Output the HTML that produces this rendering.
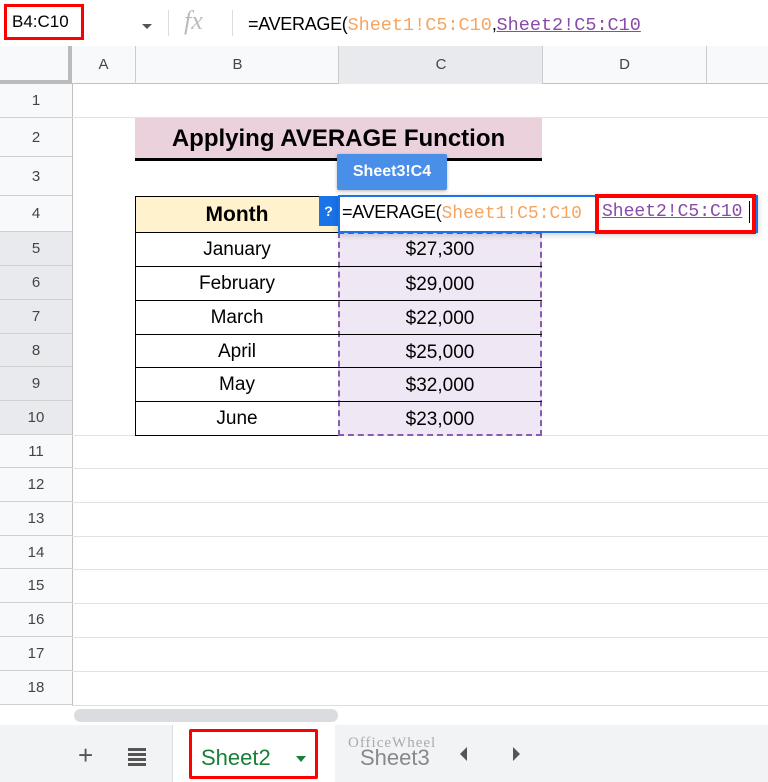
<!DOCTYPE html><html><head><style>
body{margin:0;width:768px;height:782px;position:relative;overflow:hidden;background:#fff;font-family:"Liberation Sans",Arial,sans-serif}
.a{position:absolute}
.mono{font-family:"Liberation Mono",monospace}
.rn{position:absolute;left:0;width:72px;text-align:center;font-size:15px;color:#444;background:#f8f9fa;border-bottom:1px solid #d0d0d0;box-sizing:border-box}
.hl{position:absolute;left:72px;width:696px;border-top:1px solid #e2e2e2}
.cell{position:absolute;text-align:center;font-size:19px;color:#000;box-sizing:border-box}
</style></head><body>
<div class="a" style="left:0;top:0;width:768px;height:46px;border-bottom:1px solid #d0d0d0;background:#fff"></div>
<div class="a" style="left:4px;top:4px;width:80px;height:36px;border:3px solid #f00;box-sizing:border-box;font-size:17px;line-height:30px;padding-left:5px">B4:C10</div>
<div class="a" style="left:142px;top:24px;width:0;height:0;border-left:5px solid transparent;border-right:5px solid transparent;border-top:5px solid #555"></div>
<div class="a" style="left:168px;top:10px;height:26px;border-left:1px solid #ddd"></div>
<div class="a" style="left:184px;top:6px;font-family:'Liberation Serif',serif;font-style:italic;font-size:26px;color:#bbb">fx</div>
<div class="a" style="left:232px;top:10px;height:26px;border-left:1px solid #ddd"></div>
<div class="a" style="left:248px;top:14px;font-size:18px;white-space:nowrap;letter-spacing:-0.3px">=AVERAGE(<span class="mono" style="color:#f6a460;font-size:18.5px;letter-spacing:0">Sheet1!C5:C10</span>,<span class="mono" style="color:#8a4ba8;text-decoration:underline;font-size:18.5px;letter-spacing:0">Sheet2!C5:C10</span></div>
<div class="a" style="left:0;top:46px;width:768px;height:38px;background:#f8f9fa;border-bottom:1px solid #c0c0c0;box-sizing:border-box"></div>
<div class="a" style="left:0;top:46px;width:72px;height:38px;border-right:4px solid #bbb;border-bottom:4px solid #bbb;box-sizing:border-box"></div>
<div class="a" style="left:338px;top:46px;width:204px;height:38px;background:#e8eaed"></div>
<div class="a" style="left:72px;top:56px;width:63px;text-align:center;font-size:15px;color:#444">A</div>
<div class="a" style="left:135px;top:46px;width:203px;height:38px;border-left:1px solid #ccc;text-align:center;line-height:38px;font-size:15px;color:#444">B</div>
<div class="a" style="left:338px;top:46px;width:204px;height:38px;border-left:1px solid #ccc;text-align:center;line-height:38px;font-size:15px;color:#444">C</div>
<div class="a" style="left:542px;top:46px;width:163px;height:38px;border-left:1px solid #ccc;border-right:1px solid #ccc;text-align:center;line-height:38px;font-size:15px;color:#444">D</div>
<div class="a" style="left:0;top:84px;width:72px;height:621px;background:#f8f9fa;border-right:1px solid #c0c0c0"></div>
<div class="rn" style="top:84px;height:34px;line-height:34px">1</div>
<div class="rn" style="top:118px;height:39px;line-height:39px">2</div>
<div class="rn" style="top:157px;height:39px;line-height:39px">3</div>
<div class="rn" style="top:196px;height:36px;line-height:36px">4</div>
<div class="rn" style="top:232px;height:34px;line-height:34px;background:#e8eaed">5</div>
<div class="rn" style="top:266px;height:34px;line-height:34px;background:#e8eaed">6</div>
<div class="rn" style="top:300px;height:34px;line-height:34px;background:#e8eaed">7</div>
<div class="rn" style="top:334px;height:33px;line-height:33px;background:#e8eaed">8</div>
<div class="rn" style="top:367px;height:34px;line-height:34px;background:#e8eaed">9</div>
<div class="rn" style="top:401px;height:34px;line-height:34px;background:#e8eaed">10</div>
<div class="rn" style="top:435px;height:33px;line-height:33px">11</div>
<div class="rn" style="top:468px;height:34px;line-height:34px">12</div>
<div class="rn" style="top:502px;height:34px;line-height:34px">13</div>
<div class="rn" style="top:536px;height:33px;line-height:33px">14</div>
<div class="rn" style="top:569px;height:34px;line-height:34px">15</div>
<div class="rn" style="top:603px;height:34px;line-height:34px">16</div>
<div class="rn" style="top:637px;height:34px;line-height:34px">17</div>
<div class="rn" style="top:671px;height:34px;line-height:34px">18</div>
<div class="hl" style="top:117px"></div><div class="hl" style="top:435px"></div><div class="hl" style="top:468px"></div><div class="hl" style="top:502px"></div><div class="hl" style="top:536px"></div><div class="hl" style="top:569px"></div><div class="hl" style="top:603px"></div><div class="hl" style="top:637px"></div><div class="hl" style="top:671px"></div>
<div class="a" style="left:135px;top:118px;width:407px;height:40px;background:#ead1dc;border-bottom:3px solid #000;font-weight:bold;font-size:24px;line-height:42px;text-align:center">Applying AVERAGE Function</div>
<div class="cell" style="left:135px;top:196px;width:204px;height:37px;background:#fff2cc;border:1px solid #000;font-weight:bold;font-size:21px;line-height:35px">Month</div>
<div class="cell" style="left:135px;top:232px;width:204px;height:35px;border:1px solid #000;border-top:none;line-height:36px">January</div>
<div class="cell" style="left:135px;top:266px;width:204px;height:35px;border:1px solid #000;border-top:none;line-height:36px">February</div>
<div class="cell" style="left:135px;top:300px;width:204px;height:35px;border:1px solid #000;border-top:none;line-height:36px">March</div>
<div class="cell" style="left:135px;top:334px;width:204px;height:34px;border:1px solid #000;border-top:none;line-height:35px">April</div>
<div class="cell" style="left:135px;top:367px;width:204px;height:35px;border:1px solid #000;border-top:none;line-height:36px">May</div>
<div class="cell" style="left:135px;top:401px;width:204px;height:35px;border:1px solid #000;border-top:none;line-height:36px">June</div>
<div class="a" style="left:338px;top:232px;width:204px;height:204px;background:#efe7f4;border:2px dashed #8a5bb0;box-sizing:border-box"></div>
<div class="cell" style="left:338px;top:232px;width:204px;height:34px;line-height:36px">$27,300</div>
<div class="cell" style="left:338px;top:266px;width:204px;height:34px;line-height:36px;border-top:1px solid #000">$29,000</div>
<div class="cell" style="left:338px;top:300px;width:204px;height:34px;line-height:36px;border-top:1px solid #000">$22,000</div>
<div class="cell" style="left:338px;top:334px;width:204px;height:33px;line-height:35px;border-top:1px solid #000">$25,000</div>
<div class="cell" style="left:338px;top:367px;width:204px;height:34px;line-height:36px;border-top:1px solid #000">$32,000</div>
<div class="cell" style="left:338px;top:401px;width:204px;height:34px;line-height:36px;border-top:1px solid #000">$23,000</div>
<div class="a" style="left:337px;top:154px;width:110px;height:36px;background:#4a8fe7;color:#fff;font-weight:bold;font-size:16px;line-height:36px;text-align:center;border-radius:2px;box-shadow:0 1px 3px rgba(0,0,0,.3)">Sheet3!C4</div>
<div class="a" style="left:319px;top:196px;width:19px;height:30px;background:#1a73e8;color:#fff;font-weight:bold;font-size:14px;text-align:center;line-height:30px">?</div>
<div class="a" style="left:338px;top:195px;width:420px;height:38px;border:2px solid #1a73e8;background:#fff;box-sizing:border-box;box-shadow:0 2px 6px rgba(0,0,0,.2)"></div>
<div class="a" style="left:342px;top:202px;font-size:18px;white-space:nowrap;letter-spacing:-0.3px">=AVERAGE(<span class="mono" style="color:#f6a460;font-size:18px;letter-spacing:0">Sheet1!C5:C10</span></div>
<div class="a" style="left:595px;top:194px;width:161px;height:40px;border:4px solid #f00;box-sizing:border-box"></div>
<div class="a mono" style="left:602px;top:202px;font-size:18px;color:#8a4ba8;text-decoration:underline">Sheet2!C5:C10</div>
<div class="a" style="left:749px;top:201px;height:22px;border-left:1px solid #000"></div>
<div class="a" style="left:72px;top:705px;width:696px;height:20px;background:#fff;border-top:1px solid #ddd"></div>
<div class="a" style="left:74px;top:709px;width:264px;height:13px;background:#dadce0;border-radius:7px"></div>
<div class="a" style="left:0;top:725px;width:768px;height:57px;background:#f1f3f4"></div>
<div class="a" style="left:78px;top:740px;font-size:26px;color:#555">+</div>
<div class="a" style="left:128px;top:748px;width:18px;height:3px;background:#555;box-shadow:0 5px 0 #555,0 10px 0 #555,0 15px 0 #555"></div>
<div class="a" style="left:172px;top:725px;width:162px;height:57px;background:#fff;border-left:1px solid #ddd"></div>
<div class="a" style="left:189px;top:729px;width:129px;height:50px;border:3px solid #f00;box-sizing:border-box;border-radius:2px"></div>
<div class="a" style="left:201px;top:745px;font-size:22px;color:#188038">Sheet2</div>
<div class="a" style="left:296px;top:756px;width:0;height:0;border-left:5px solid transparent;border-right:5px solid transparent;border-top:6px solid #188038"></div>
<div class="a" style="left:360px;top:745px;font-size:22px;color:#888">Sheet3</div>
<div class="a" style="left:348px;top:735px;font-family:'Liberation Serif',serif;font-size:15px;color:#aaa;letter-spacing:1px">OfficeWheel</div>
<div class="a" style="left:460px;top:747px;width:0;height:0;border-top:7px solid transparent;border-bottom:7px solid transparent;border-right:7px solid #555"></div>
<div class="a" style="left:513px;top:747px;width:0;height:0;border-top:7px solid transparent;border-bottom:7px solid transparent;border-left:7px solid #555"></div>
</body></html>
